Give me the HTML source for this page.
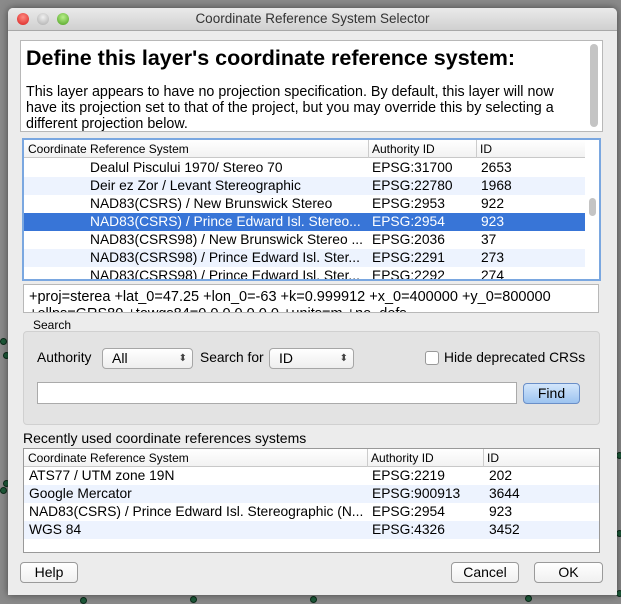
<!DOCTYPE html>
<html><head><meta charset="utf-8"><style>
*{margin:0;padding:0;box-sizing:border-box}
body{width:621px;height:603px;overflow:hidden;background:#8a8a8a;font-family:"Liberation Sans",sans-serif;font-size:13.8px;color:#000;position:relative}
.abs{position:absolute}
.win{left:8px;top:8px;width:609px;height:587px;background:#ececec;border-radius:5px 5px 0 0;box-shadow:0 0 8px rgba(0,0,0,.5)}
.title{left:8px;top:8px;width:609px;height:23px;background:linear-gradient(#eaeaea,#d0d0d0);border-bottom:1px solid #a8a8a8;border-radius:5px 5px 0 0;text-align:center;line-height:22px;font-size:13.5px;color:#333}
.tl{width:12px;height:12px;border-radius:50%;top:13px}
.box{background:#fff;border:1px solid #b8b8b8}
.row{position:absolute;left:0;height:18px;line-height:18px;white-space:nowrap;font-size:13.8px}
.row span{position:absolute}
.alt{background:#edf3fe}
.sel{background:#3875d7;color:#fff}
.hdr{position:absolute;left:0;height:18px;line-height:18px;font-size:12px;border-bottom:1px solid #c8c8c8;background:linear-gradient(#fff,#f2f2f2)}
.hdr span{position:absolute}
.btn{background:linear-gradient(#fff,#f0f0f0);border:1px solid #9a9a9a;border-radius:4px;text-align:center;line-height:19px;font-size:14px}
.sb{background:linear-gradient(#fff,#eee);border:1px solid #a6a6a6;border-radius:4px;height:21px;line-height:19px;padding-left:9px;font-size:14px}
.sb:after{content:"⬍";position:absolute;right:5px;top:0;font-size:10px;color:#444}
.dot{width:7px;height:7px;border-radius:50%;background:#1e5a3a;border:1px solid #0b2b1a}
</style></head><body>
<div class="abs dot" style="left:0;top:338px"></div>
<div class="abs dot" style="left:3px;top:352px"></div>
<div class="abs dot" style="left:3px;top:480px"></div>
<div class="abs dot" style="left:0;top:487px"></div>
<div class="abs dot" style="left:616px;top:452px"></div>
<div class="abs dot" style="left:616px;top:530px"></div>
<div class="abs dot" style="left:616px;top:590px"></div>
<div class="abs dot" style="left:80px;top:597px"></div>
<div class="abs dot" style="left:190px;top:596px"></div>
<div class="abs dot" style="left:310px;top:596px"></div>
<div class="abs dot" style="left:525px;top:595px"></div>
<div class="abs win"></div>
<div class="abs title">Coordinate Reference System Selector</div>
<div class="abs tl" style="left:17px;background:radial-gradient(circle at 50% 35%,#ff8a80,#d81e1e)"></div>
<div class="abs tl" style="left:37px;background:radial-gradient(circle at 50% 35%,#f0f0f0,#aaa)"></div>
<div class="abs tl" style="left:57px;background:radial-gradient(circle at 50% 35%,#b9f08a,#4a9e1e)"></div>

<div class="abs box" style="left:20px;top:40px;width:583px;height:92px">
 <div class="abs" style="left:5px;top:5px;font-size:21.5px;font-weight:bold;white-space:nowrap">Define this layer's coordinate reference system:</div>
 <div class="abs" style="left:5px;top:43px;white-space:nowrap;font-size:14.3px;line-height:16px">This layer appears to have no projection specification. By default, this layer will now<br>have its projection set to that of the project, but you may override this by selecting a<br>different projection below.</div>
 <div class="abs" style="left:569px;top:3px;width:8px;height:83px;background:#c4c4c4;border-radius:4px"></div>
</div>

<div class="abs box" style="left:22px;top:138px;width:579px;height:143px;border:2px solid #7aa7e0;overflow:hidden">
 <div class="hdr" style="top:0;width:561px"><span style="left:4px">Coordinate Reference System</span><span style="left:344px;border-left:1px solid #ccc;padding-left:3px">Authority ID</span><span style="left:452px;border-left:1px solid #ccc;padding-left:3px">ID</span></div>
 <div class="row" style="top:19px;width:561px"><span style="left:66px">Dealul Piscului 1970/ Stereo 70</span><span style="left:348px">EPSG:31700</span><span style="left:457px">2653</span></div>
 <div class="row alt" style="top:37px;width:561px"><span style="left:66px">Deir ez Zor / Levant Stereographic</span><span style="left:348px">EPSG:22780</span><span style="left:457px">1968</span></div>
 <div class="row" style="top:55px;width:561px"><span style="left:66px">NAD83(CSRS) / New Brunswick Stereo</span><span style="left:348px">EPSG:2953</span><span style="left:457px">922</span></div>
 <div class="row sel" style="top:73px;width:561px"><span style="left:66px">NAD83(CSRS) / Prince Edward Isl. Stereo...</span><span style="left:348px">EPSG:2954</span><span style="left:457px">923</span></div>
 <div class="row" style="top:91px;width:561px"><span style="left:66px">NAD83(CSRS98) / New Brunswick Stereo ...</span><span style="left:348px">EPSG:2036</span><span style="left:457px">37</span></div>
 <div class="row alt" style="top:109px;width:561px"><span style="left:66px">NAD83(CSRS98) / Prince Edward Isl. Ster...</span><span style="left:348px">EPSG:2291</span><span style="left:457px">273</span></div>
 <div class="row" style="top:127px;width:561px"><span style="left:66px">NAD83(CSRS98) / Prince Edward Isl. Ster...</span><span style="left:348px">EPSG:2292</span><span style="left:457px">274</span></div>
 <div class="abs" style="left:565px;top:58px;width:7px;height:18px;background:#c4c4c4;border-radius:4px"></div>
</div>

<div class="abs box" style="left:23px;top:284px;width:576px;height:29px;overflow:hidden">
 <div class="abs" style="left:5px;top:4px;white-space:nowrap;font-size:14.5px;line-height:17px">+proj=sterea +lat_0=47.25 +lon_0=-63 +k=0.999912 +x_0=400000 +y_0=800000<br>+ellps=GRS80 +towgs84=0,0,0,0,0,0,0 +units=m +no_defs</div>
</div>

<div class="abs" style="left:33px;top:318px;font-size:12px">Search</div>
<div class="abs" style="left:23px;top:331px;width:577px;height:94px;background:#e3e3e3;border:1px solid #d0d0d0;border-radius:4px"></div>
<div class="abs" style="left:37px;top:350px;font-size:13.8px">Authority</div>
<div class="abs sb" style="left:102px;top:348px;width:91px">All</div>
<div class="abs" style="left:200px;top:350px;font-size:13.8px">Search for</div>
<div class="abs sb" style="left:269px;top:348px;width:85px">ID</div>
<div class="abs" style="left:425px;top:351px;width:14px;height:14px;border:1px solid #999;border-radius:3px;background:#fff"></div>
<div class="abs" style="left:444px;top:350px;font-size:13.8px">Hide deprecated CRSs</div>
<div class="abs" style="left:37px;top:382px;width:480px;height:22px;background:#fff;border:1px solid #aaa"></div>
<div class="abs btn" style="left:523px;top:383px;width:57px;height:21px;background:linear-gradient(#d3e6fb,#9cc3f0);border-color:#6a8fc8">Find</div>

<div class="abs" style="left:23px;top:430px;font-size:14px">Recently used coordinate references systems</div>
<div class="abs box" style="left:23px;top:448px;width:577px;height:105px;border-color:#999;overflow:hidden">
 <div class="hdr" style="top:0;width:577px"><span style="left:4px">Coordinate Reference System</span><span style="left:343px;border-left:1px solid #ccc;padding-left:3px">Authority ID</span><span style="left:459px;border-left:1px solid #ccc;padding-left:3px">ID</span></div>
 <div class="row" style="top:18px;width:577px"><span style="left:5px">ATS77 / UTM zone 19N</span><span style="left:348px">EPSG:2219</span><span style="left:465px">202</span></div>
 <div class="row alt" style="top:36px;width:577px"><span style="left:5px">Google Mercator</span><span style="left:348px">EPSG:900913</span><span style="left:465px">3644</span></div>
 <div class="row" style="top:54px;width:577px"><span style="left:5px">NAD83(CSRS) / Prince Edward Isl. Stereographic (N...</span><span style="left:348px">EPSG:2954</span><span style="left:465px">923</span></div>
 <div class="row alt" style="top:72px;width:577px"><span style="left:5px">WGS 84</span><span style="left:348px">EPSG:4326</span><span style="left:465px">3452</span></div>
</div>

<div class="abs btn" style="left:20px;top:562px;width:58px;height:21px">Help</div>
<div class="abs btn" style="left:451px;top:562px;width:68px;height:21px">Cancel</div>
<div class="abs btn" style="left:534px;top:562px;width:69px;height:21px">OK</div>
</body></html>
